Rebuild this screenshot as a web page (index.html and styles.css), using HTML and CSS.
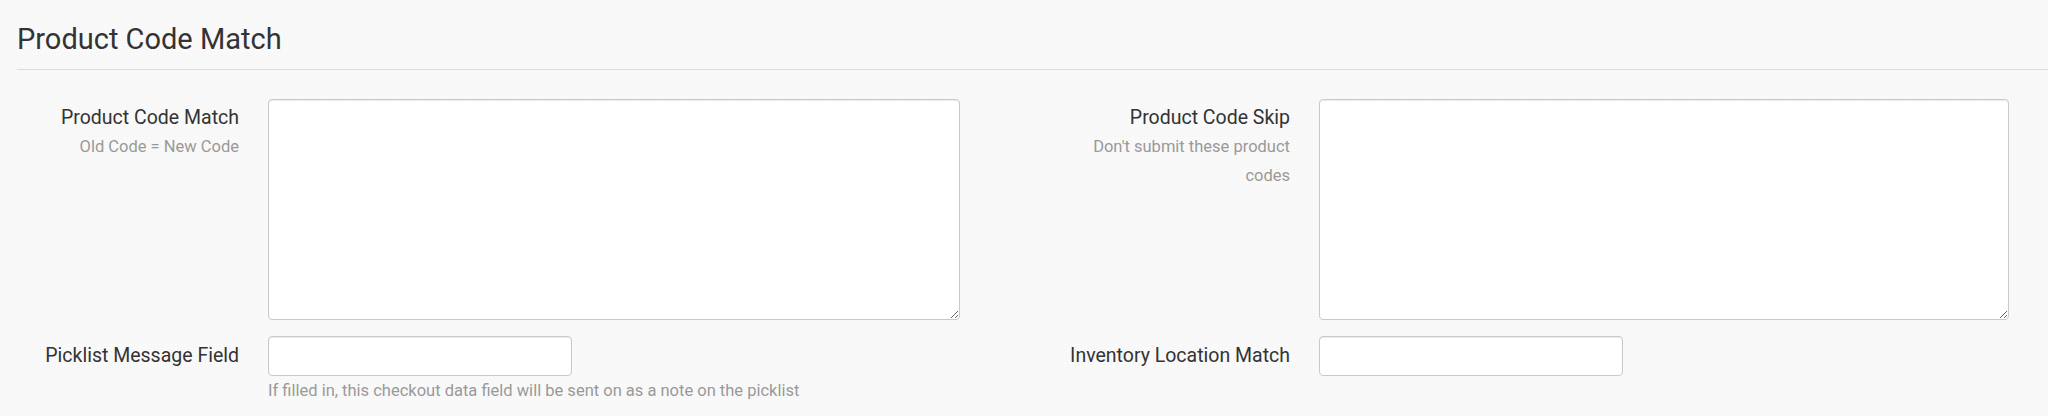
FILE: index.html
```html
<!DOCTYPE html>
<html lang="en">
<head>
	<meta charset="UTF-8">
	<title>Product Code Match</title>
	<link rel="stylesheet" href="styles.css">
</head>
<body>
<div class="page">
	<h2 class="section-title">Product Code Match</h2>

	<div class="form-grid">
		<div class="field-row">
			<label class="field-label" for="code-match">Product Code Match
				<span class="hint">Old Code = New Code</span>
			</label>
			<textarea id="code-match" class="code-box"></textarea>
		</div>
		<div class="field-row">
			<label class="field-label" for="code-skip">Product Code Skip
				<span class="hint">Don't submit these product codes</span>
			</label>
			<textarea id="code-skip" class="code-box"></textarea>
		</div>

		<div class="field-row short">
			<label class="field-label" for="picklist-msg">Picklist Message Field</label>
			<div class="field">
				<input id="picklist-msg" class="text-box" type="text">
				<p class="help">If filled in, this checkout data field will be sent on as a note on the picklist</p>
			</div>
		</div>
		<div class="field-row short">
			<label class="field-label" for="inv-loc">Inventory Location Match</label>
			<div class="field">
				<input id="inv-loc" class="text-box" type="text">
			</div>
		</div>
	</div>
</div>
</body>
</html>
```

FILE: styles.css
```css
html, body {
  margin: 0;
  padding: 0;
}
body {
  background-color: #f9f9f9;
  background-image: radial-gradient(rgba(0,0,0,0.02) 1px, transparent 1px);
  background-size: 3px 3px;
  font-family: Roboto, "Liberation Sans", Arial, sans-serif;
  color: #333;
}
.page {
  padding: 23px 0 0 17px;
}
.section-title {
  margin: 0;
  font-size: 29px;
  font-weight: 400;
  line-height: 33px;
  padding-bottom: 13px;
  border-bottom: 1px solid #dcdcdc;
  color: #333;
}

.form-grid {
  display: grid;
  grid-template-columns: 943px 941px;
  column-gap: 108px;
  row-gap: 16px;
  margin-top: 29px;
}
.field-row {
  display: grid;
  grid-template-columns: 222px 1fr;
  column-gap: 29px;
}
.field-label {
  display: block;
  text-align: right;
  font-size: 19.5px;
  line-height: 28px;
  padding-top: 5px;
  color: #333;
}
.field-label .hint {
  display: block;
  font-size: 16.5px;
  line-height: 29px;
  color: #999;
}
.short .field-label {
  padding-top: 6px;
}

.code-box,
.text-box {
  box-sizing: border-box;
  background: #fff;
  border: 1px solid #c9c9c9;
  border-radius: 4px;
  box-shadow: inset 0 1px 1px rgba(0,0,0,0.08);
  font-family: inherit;
  font-size: 16px;
  color: #333;
  margin: 0;
}
.code-box {
  display: block;
  width: 100%;
  height: 221px;
}
.text-box {
  display: block;
  width: 304px;
  height: 40px;
  padding: 0 10px;
}
.help {
  margin: 3px 0 0;
  font-size: 16.5px;
  line-height: 24px;
  color: #999;
}
```
